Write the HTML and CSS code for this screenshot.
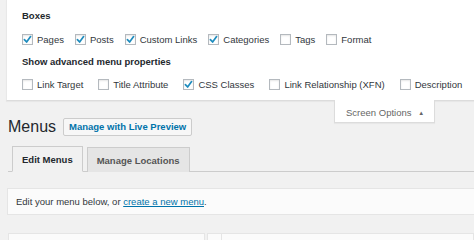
FILE: index.html
```html
<!DOCTYPE html>
<html>
<head>
<meta charset="utf-8">
<link rel="stylesheet" href="styles.css">
</head>
<body>
<div class="page">
  <div class="screen-meta">
    <h5 class="group-title">Boxes</h5>
    <div class="opt-row">
      <label class="opt"><span class="cb on"><svg viewBox="0 0 11 11"><path d="M2.4 5.6 L4.6 8 L8.6 2.6"/></svg></span>Pages</label>
      <label class="opt"><span class="cb on"><svg viewBox="0 0 11 11"><path d="M2.4 5.6 L4.6 8 L8.6 2.6"/></svg></span>Posts</label>
      <label class="opt"><span class="cb on"><svg viewBox="0 0 11 11"><path d="M2.4 5.6 L4.6 8 L8.6 2.6"/></svg></span>Custom Links</label>
      <label class="opt"><span class="cb on"><svg viewBox="0 0 11 11"><path d="M2.4 5.6 L4.6 8 L8.6 2.6"/></svg></span>Categories</label>
      <label class="opt"><span class="cb"></span>Tags</label>
      <label class="opt"><span class="cb"></span>Format</label>
    </div>
    <h5 class="group-title">Show advanced menu properties</h5>
    <div class="opt-row wide">
      <label class="opt"><span class="cb"></span>Link Target</label>
      <label class="opt"><span class="cb"></span>Title Attribute</label>
      <label class="opt"><span class="cb on"><svg viewBox="0 0 11 11"><path d="M2.4 5.6 L4.6 8 L8.6 2.6"/></svg></span>CSS Classes</label>
      <label class="opt"><span class="cb"></span>Link Relationship (XFN)</label>
      <label class="opt"><span class="cb"></span>Description</label>
    </div>
    <div class="screen-tab">Screen Options <span class="arrow">&#9650;</span></div>
  </div>

  <div class="head-row">
    <h1 class="title">Menus</h1>
    <a class="btn">Manage with Live Preview</a>
  </div>

  <div class="tabs">
    <span class="tab active">Edit Menus</span>
    <span class="tab">Manage Locations</span>
  </div>

  <div class="manage">Edit your menu below, or <a class="link">create a new menu</a>.</div>

  <div class="frame">
    <div class="col-left"></div>
    <div class="col-right"><span class="col-gap"></span></div>
  </div>
</div>
</body>
</html>
```
FILE: styles.css
```css
html, body {
  margin: 0;
  padding: 0;
  background: #f1f1f1;
  font-family: "Liberation Sans", Arial, sans-serif;
  color: #32373c;
  overflow: hidden;
}
.page {
  width: 474px;
  height: 240px;
  overflow: hidden;
}
.screen-meta {
  position: relative;
  margin-left: 6px;
  width: 500px;
  background: #fff;
  border-left: 1px solid #e8e8e8;
  border-bottom: 1px solid #dcdcdc;
  box-shadow: 0 1px 1px rgba(0,0,0,0.04);
  padding: 9px 0 8px 15px;
  box-sizing: border-box;
  height: 101px;
}
.group-title {
  margin: 0;
  font-size: 9.5px;
  line-height: 14px;
  font-weight: bold;
  color: #23282d;
}
.opt-row {
  display: flex;
  align-items: center;
  gap: 11px;
  height: 15px;
  margin: 9px 0 8px;
}
.opt-row.wide {
  margin: 8px 0 0;
  gap: 15px;
}
.opt {
  display: inline-flex;
  align-items: center;
  font-size: 9.5px;
  line-height: 15px;
  color: #32373c;
  white-space: nowrap;
}
.cb {
  display: inline-block;
  box-sizing: border-box;
  width: 11px;
  height: 11px;
  border: 1px solid #b4b9be;
  background: #fff;
  box-shadow: inset 0 1px 2px rgba(0,0,0,0.1);
  margin-right: 4px;
  position: relative;
}
.cb svg {
  position: absolute;
  left: -1px;
  top: -1px;
  width: 11px;
  height: 11px;
}
.cb svg path {
  fill: none;
  stroke: #1e8cbe;
  stroke-width: 1.7;
  stroke-linecap: round;
  stroke-linejoin: round;
}
.screen-tab {
  position: absolute;
  top: 100px;
  left: 327px;
  width: 101px;
  height: 23px;
  box-sizing: border-box;
  background: #fff;
  border: 1px solid #dcdcdc;
  border-top: none;
  box-shadow: 0 1px 1px rgba(0,0,0,0.04);
  font-size: 9.5px;
  line-height: 22px;
  padding-top: 2px;
  color: #666;
  padding-left: 11px;
  white-space: nowrap;
}
.arrow {
  font-size: 6px;
  margin-left: 4px;
  vertical-align: 1px;
  color: #666;
}
.head-row {
  display: flex;
  align-items: center;
  height: 20px;
  margin: 16px 0 0 8px;
}
.title {
  margin: 0;
  font-size: 16px;
  line-height: 20px;
  font-weight: normal;
  color: #23282d;
}
.btn {
  margin-left: 7px;
  height: 18px;
  box-sizing: border-box;
  border: 1px solid #ccc;
  background: #f7f7f7;
  border-radius: 2px;
  padding: 0 5px;
  font-size: 9.5px;
  line-height: 16px;
  font-weight: bold;
  color: #0073aa;
}
.tabs {
  display: flex;
  align-items: flex-end;
  margin: 9px 0 0 8px;
  padding-left: 4px;
  border-bottom: 1px solid #ccc;
  height: 25px;
}
.tab {
  box-sizing: border-box;
  height: 25px;
  border: 1px solid #ccc;
  border-bottom: none;
  background: #e5e5e5;
  padding: 0 9px;
  margin-right: 4px;
  font-size: 9.5px;
  line-height: 25px;
  font-weight: bold;
  color: #555;
  margin-bottom: -1px;
}
.tab.active {
  background: #f1f1f1;
  color: #23282d;
  height: 26px;
  border-bottom: 1px solid #f1f1f1;
}
.manage {
  margin: 16px 0 0 7px;
  width: 480px;
  height: 27px;
  box-sizing: border-box;
  background: #fbfbfb;
  border: 1px solid #e5e5e5;
  padding-left: 8px;
  font-size: 9.5px;
  line-height: 25px;
  color: #32373c;
}
.link {
  color: #0073aa;
  text-decoration: underline;
}
.frame {
  display: flex;
  margin: 18px 0 0 8px;
  gap: 2px;
}
.col-left {
  width: 197px;
  height: 20px;
  background: #fbfbfb;
  border: 1px solid #e5e5e5;
  box-sizing: border-box;
}
.col-right {
  flex: 1;
  height: 20px;
  background: #fbfbfb;
  border: 1px solid #e5e5e5;
  box-sizing: border-box;
  position: relative;
}
.col-gap {
  position: absolute;
  left: 13px;
  top: 0;
  bottom: 0;
  border-left: 1px solid #e5e5e5;
}
```
